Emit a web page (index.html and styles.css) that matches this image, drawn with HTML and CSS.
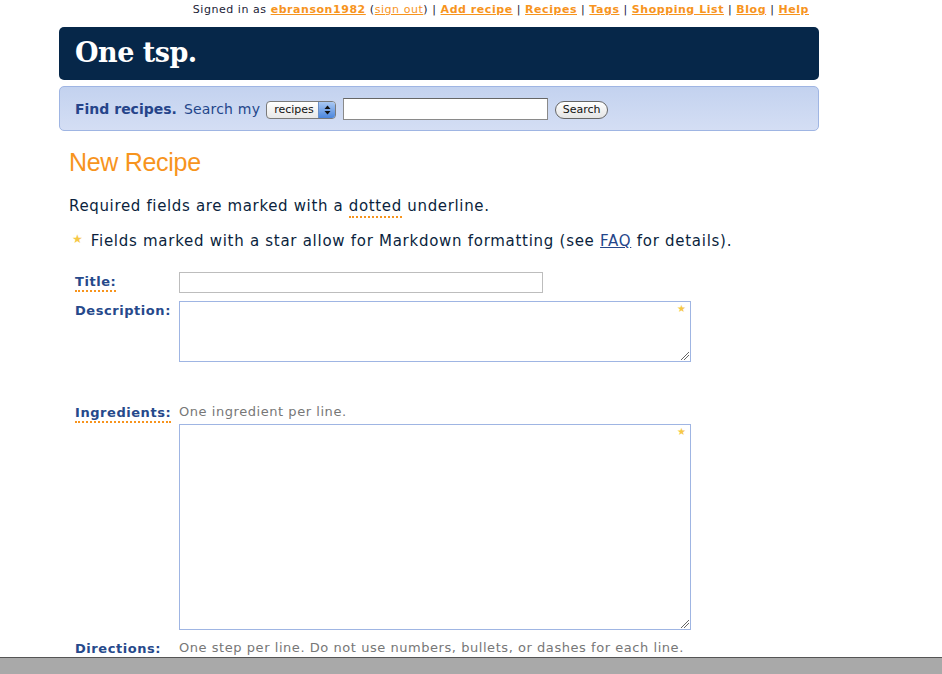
FILE: index.html
```html
<!DOCTYPE html>
<html>
<head>
<meta charset="utf-8">
<title>One tsp. - New Recipe</title>
<link rel="stylesheet" href="styles.css">
</head>
<body>
<div class="page">
  <div class="topnav">
    Signed in as <a class="nl" href="#"><b>ebranson1982</b></a> (<a class="nl" href="#">sign out</a>) | <a class="nl" href="#"><b>Add recipe</b></a> | <a class="nl" href="#"><b>Recipes</b></a> | <a class="nl" href="#"><b>Tags</b></a> | <a class="nl" href="#"><b>Shopping List</b></a> | <a class="nl" href="#"><b>Blog</b></a> | <a class="nl" href="#"><b>Help</b></a>
  </div>
  <div class="header"><span class="logo">One tsp.</span></div>
  <div class="searchbar">
    <b class="find">Find recipes.</b>
    <span class="searchmy">Search my</span>
    <span class="select">recipes<span class="arrows"><svg width="7" height="10" viewBox="0 0 7 10"><path d="M3.5 0.5L6.5 4H0.5Z"/><path d="M3.5 9.5L6.5 6H0.5Z"/></svg></span></span>
    <span class="sinput"></span>
    <span class="sbutton">Search</span>
  </div>
  <div class="content">
    <h1 class="title">New Recipe</h1>
    <p class="note">Required fields are marked with a <span class="req">dotted</span> underline.</p>
    <p class="note star-note"><span class="star">★</span>Fields marked with a star allow for Markdown formatting (see <a class="faq" href="#">FAQ</a> for details).</p>
    <div class="form">
      <div class="row">
        <div class="label"><span class="req">Title:</span></div>
        <div class="field"><span class="tinput"></span></div>
      </div>
      <div class="row">
        <div class="label">Description:</div>
        <div class="field"><span class="tarea desc"><span class="mstar">★</span><span class="grip"></span></span></div>
      </div>
      <div class="row gap">
        <div class="label"><span class="req">Ingredients:</span></div>
        <div class="field"><div class="hint">One ingredient per line.</div><span class="tarea ingr"><span class="mstar">★</span><span class="grip"></span></span></div>
      </div>
      <div class="row">
        <div class="label">Directions:</div>
        <div class="field"><div class="hint">One step per line. Do not use numbers, bullets, or dashes for each line.</div></div>
      </div>
    </div>
  </div>
</div>
<div class="statusbar"></div>
</body>
</html>
```
FILE: styles.css
```css
html, body { margin: 0; padding: 0; background: #fff; }
body { font-family: "DejaVu Sans", Verdana, sans-serif; color: #0b1f3d; overflow: hidden; height: 674px; }
.page { width: 760px; margin-left: 59px; }
.topnav { font-size: 11px; letter-spacing: 0.55px; text-align: right; padding: 3px 10px 0 0; height: 24px; box-sizing: border-box; color: #1a2236; white-space: nowrap; }
.nl { color: #f7941d; text-decoration: underline; }
.header { height: 53px; background: #062749; border-radius: 5px; display: flex; align-items: center; padding-left: 16px; margin-top: 3px; }
.logo { font-family: "DejaVu Serif", serif; font-weight: bold; font-size: 27px; color: #fff; letter-spacing: -0.5px; position: relative; top: -1px; }
.searchbar { margin-top: 6px; height: 45px; box-sizing: border-box; border: 1px solid #9fb5e3; border-radius: 5px; background: linear-gradient(#c3d2ef, #d4def4); display: flex; align-items: center; padding-left: 15px; font-size: 14px; color: #24468a; }
.find { font-weight: bold; color: #25448a; margin-right: 7px; }
.searchmy { margin-right: 6px; letter-spacing: 0.2px; }
.select { display: inline-flex; align-items: center; height: 18px; width: 70px; box-sizing: border-box; border: 1px solid #7a7a7a; border-radius: 4px; background: linear-gradient(#fff, #e8e8e8); font-size: 11px; color: #111; padding-left: 7px; position: relative; top: 1px; overflow: hidden; }
.arrows { position: absolute; right: 0; top: 0; bottom: 0; width: 16px; background: linear-gradient(#a9c8f3, #4b86dd); display: flex; align-items: center; justify-content: center; border-left: 1px solid #6a8fc8; }
.arrows svg path { fill: #111; }
.sinput { display: inline-block; width: 205px; height: 22px; box-sizing: border-box; background: #fff; border: 1px solid #8a8a8a; border-top-color: #666; margin-left: 7px; }
.sbutton { display: inline-flex; align-items: center; justify-content: center; width: 53px; height: 18px; box-sizing: border-box; border: 1px solid #666; border-radius: 9px; background: linear-gradient(#fff, #e4e4e4); font-size: 11px; color: #111; margin-left: 7px; position: relative; top: 1px; }
.content { padding-left: 10px; }
.title { font-family: "Liberation Sans", Arial, sans-serif; font-weight: normal; color: #f7941d; font-size: 25px; margin: 16px 0 0 0; line-height: 30px; letter-spacing: -0.3px; }
.note { font-size: 15px; margin: 19px 0 0 0; line-height: 20px; letter-spacing: 0.65px; }
.star-note { margin-top: 15px; letter-spacing: 0.72px; }
.req { border-bottom: 2px dotted #f7941d; padding-bottom: 1px; }
.star { color: #f6c846; font-size: 12px; margin: 0 8px 0 3px; position: relative; top: -3px; letter-spacing: 0; }
.faq { color: #24468a; text-decoration: underline; }
.form { margin-top: 20px; }
.row { display: flex; }
.label { width: 104px; padding-left: 6px; font-size: 13px; font-weight: bold; color: #26498b; line-height: 20px; letter-spacing: 0.55px; }
.field { display: flex; flex-direction: column; }
.tinput { display: block; width: 364px; height: 21px; box-sizing: border-box; border: 1px solid #bdbdbd; margin-bottom: 8px; }
.tarea { display: block; position: relative; width: 512px; box-sizing: border-box; border: 1px solid #9fb5e3; background: #fff; }
.desc { height: 61px; }
.ingr { height: 206px; margin-bottom: 9px; }
.gap { margin-top: 41px; }
.mstar { position: absolute; right: 4px; top: 1px; font-size: 10px; color: #f6c846; letter-spacing: 0; }
.grip { position: absolute; right: 1px; bottom: 1px; width: 8px; height: 8px; background: linear-gradient(135deg, transparent 45%, #666 45%, #666 52%, transparent 52%, transparent 68%, #666 68%, #666 75%, transparent 75%); }
.hint { font-size: 13px; color: #777; line-height: 17px; height: 16px; margin-bottom: 5px; letter-spacing: 0.55px; }
.statusbar { position: fixed; left: 0; right: 0; bottom: 0; height: 16px; background: #a9a9a9; border-top: 1px solid #555; }
```
